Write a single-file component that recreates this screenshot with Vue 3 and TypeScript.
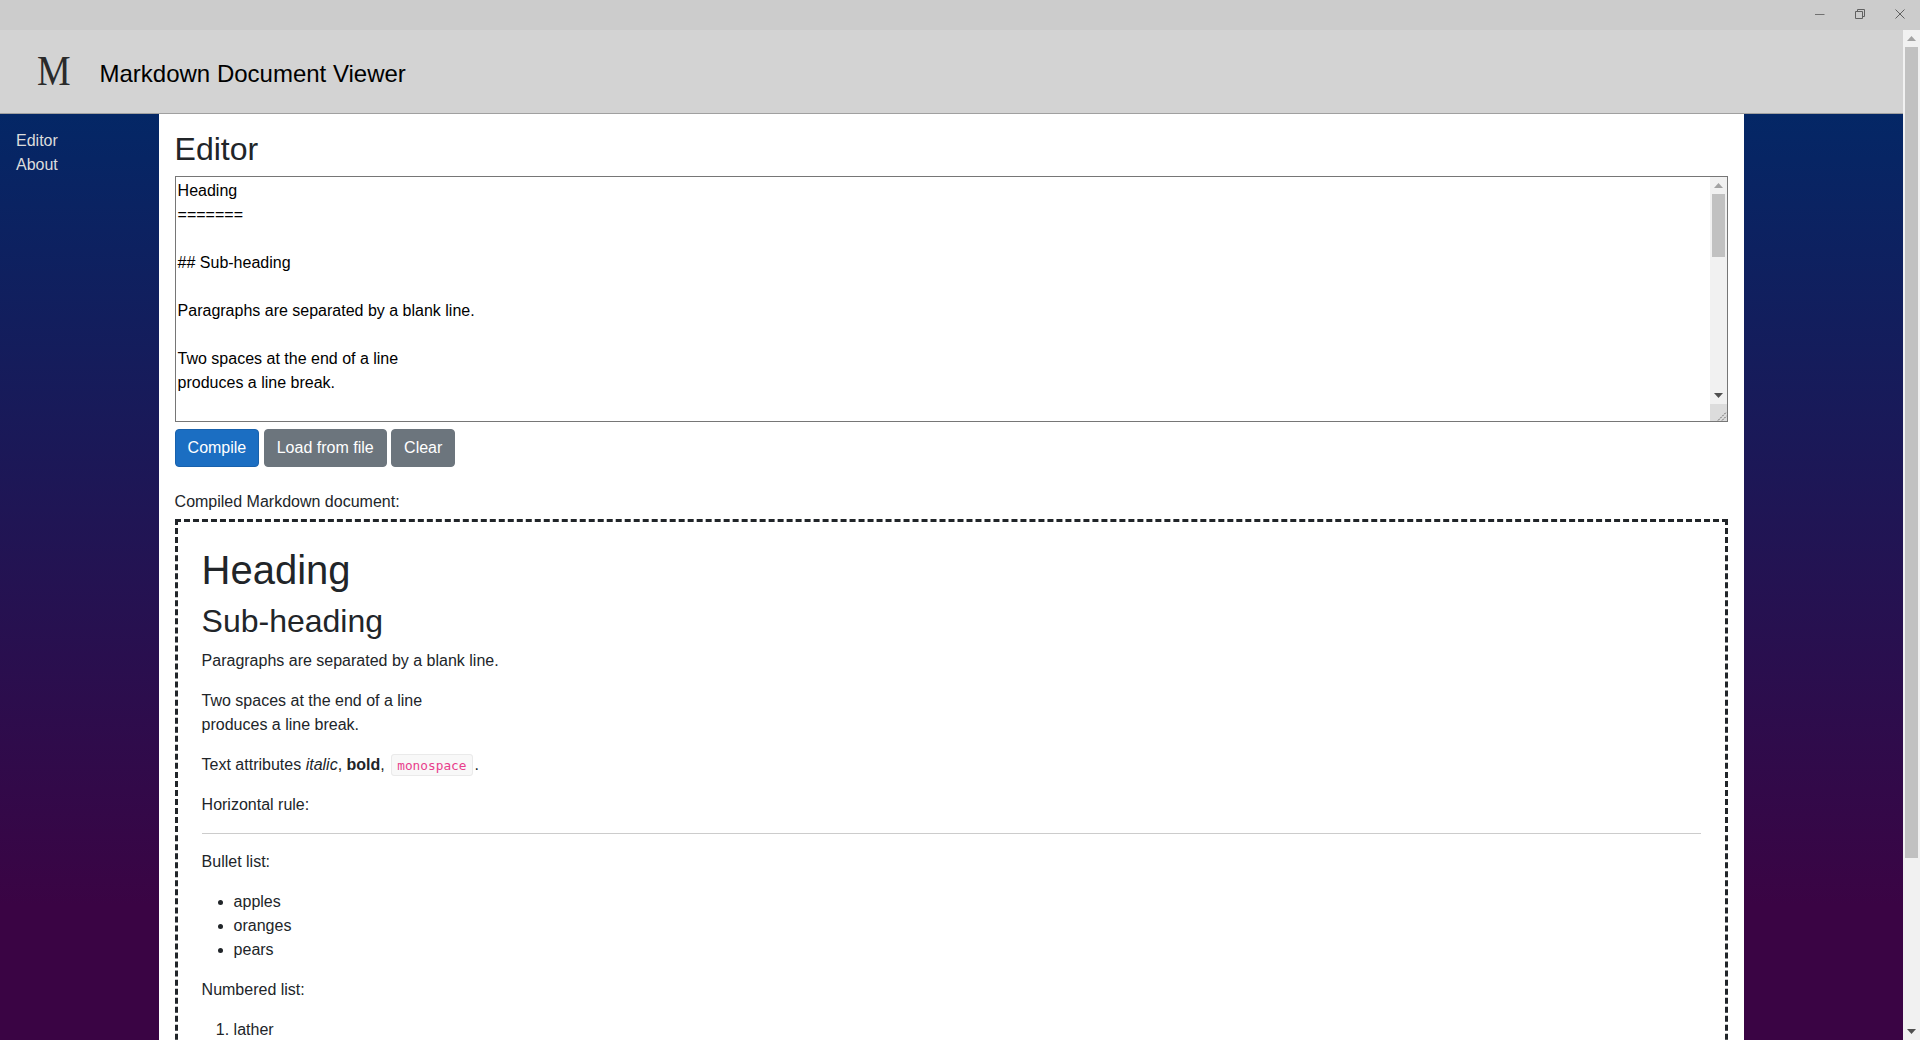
<script setup lang="ts">
import { ref } from 'vue'

const source = ref<string>(`Heading
=======

## Sub-heading

Paragraphs are separated by a blank line.

Two spaces at the end of a line
produces a line break.

Text attributes _italic_, **bold**, \`monospace\`.

Horizontal rule:

---

Bullet list:

  * apples
  * oranges
  * pears

Numbered list:

  1. lather
  2. rinse
  3. repeat

An [example](http://example.com).

![Image](Icon-pictures.png "icon")`)

const navItems: string[] = ['Editor', 'About']
const bullets: string[] = ['apples', 'oranges', 'pears']
</script>

<template>
  <div class="window">
    <div class="titlebar">
      <button class="win-btn" aria-label="Minimize">
        <svg width="10" height="10" viewBox="0 0 10 10"><path d="M0 5.5h9.5" stroke="#707070" fill="none" /></svg>
      </button>
      <button class="win-btn" aria-label="Restore">
        <svg width="10" height="10" viewBox="0 0 10 10"><path d="M.5 2.5h7v7h-7zM2.5 2.5v-2h7v7h-2" stroke="#606060" fill="none" /></svg>
      </button>
      <button class="win-btn" aria-label="Close">
        <svg width="10" height="10" viewBox="0 0 10 10"><path d="M.5.5l9 9M9.5.5l-9 9" stroke="#606060" fill="none" /></svg>
      </button>
    </div>

    <div class="viewport">
      <div class="page">
        <header class="appbar">
          <span class="logo">M</span>
          <span class="app-title">Markdown Document Viewer</span>
        </header>

        <div class="layout">
          <nav class="sidebar">
            <a v-for="item in navItems" :key="item" href="#" class="nav-link">{{ item }}</a>
          </nav>

          <main class="main">
            <h2 class="editor-title">Editor</h2>
            <div class="source-wrap">
              <textarea v-model="source" class="source" rows="10" spellcheck="false"></textarea>
              <div class="vbar vbar-inset">
                <div class="vbar-btn">
                  <svg width="9" height="5" viewBox="0 0 9 5"><path d="M4.5 0L9 5H0z" fill="#a3a3a3" /></svg>
                </div>
                <div class="vbar-track"><div class="vbar-thumb thumb-source"></div></div>
                <div class="vbar-btn">
                  <svg width="9" height="5" viewBox="0 0 9 5"><path d="M0 0h9L4.5 5z" fill="#505050" /></svg>
                </div>
                <div class="vbar-corner">
                  <svg width="17" height="17" viewBox="0 0 17 17"><path d="M8 16.5L16.5 8M12 16.5L16.5 12" stroke="#666" fill="none" stroke-dasharray="2 1" /></svg>
                </div>
              </div>
            </div>
            <div class="actions">
              <button class="btn btn-primary">Compile</button>
              <button class="btn btn-secondary">Load from file</button>
              <button class="btn btn-secondary">Clear</button>
            </div>
            <p class="compiled-label">Compiled Markdown document:</p>
            <article class="document">
              <h1>Heading</h1>
              <h2>Sub-heading</h2>
              <p>Paragraphs are separated by a blank line.</p>
              <p>Two spaces at the end of a line<br />produces a line break.</p>
              <p>Text attributes <em>italic</em>, <strong>bold</strong>, <code>monospace</code>.</p>
              <p>Horizontal rule:</p>
              <hr />
              <p>Bullet list:</p>
              <ul>
                <li v-for="b in bullets" :key="b">{{ b }}</li>
              </ul>
              <p>Numbered list:</p>
              <ol>
                <li>lather</li>
              </ol>
            </article>
          </main>

          <div class="gutter"></div>
        </div>
      </div>

      <div class="vbar">
        <div class="vbar-btn">
          <svg width="9" height="5" viewBox="0 0 9 5"><path d="M4.5 0L9 5H0z" fill="#a3a3a3" /></svg>
        </div>
        <div class="vbar-track"><div class="vbar-thumb thumb-page"></div></div>
        <div class="vbar-btn">
          <svg width="9" height="5" viewBox="0 0 9 5"><path d="M0 0h9L4.5 5z" fill="#505050" /></svg>
        </div>
      </div>
    </div>
  </div>
</template>

<style scoped>
.window {
  height: 100vh;
  display: flex;
  flex-direction: column;
  font-family: "Liberation Sans", Arial, sans-serif;
  font-size: 16px;
  line-height: 1.5;
  color: #212529;
}
.titlebar {
  flex: 0 0 30px;
  background: #cccccc;
  display: flex;
  justify-content: flex-end;
}
.win-btn {
  width: 40px;
  height: 30px;
  border: 0;
  padding: 0 0 3px 0;
  background: none;
  display: flex;
  align-items: center;
  justify-content: center;
}
.viewport {
  flex: 1 1 auto;
  min-height: 0;
  display: flex;
}
.page {
  flex: 1 1 auto;
  min-width: 0;
  overflow: hidden;
  display: flex;
  flex-direction: column;
}
.vbar {
  flex: 0 0 17px;
  width: 17px;
  display: flex;
  flex-direction: column;
  background: #f1f1f1;
}
.vbar-inset {
  position: absolute;
  top: 1px;
  right: 1px;
  bottom: 1px;
}
.vbar-btn {
  flex: 0 0 17px;
  display: flex;
  align-items: center;
  justify-content: center;
}
.vbar-track {
  flex: 1 1 auto;
  min-height: 0;
  padding: 0 2px;
}
.vbar-thumb {
  background: #c1c1c1;
}
.thumb-page {
  height: 811px;
}
.thumb-source {
  height: 63px;
}
.vbar-corner {
  flex: 0 0 17px;
  height: 17px;
  background: #dcdcdc;
}
.vbar-corner svg {
  display: block;
}
.appbar {
  flex: 0 0 84px;
  box-sizing: border-box;
  background: #d3d3d3;
  border-bottom: 1px solid #a0a0a0;
  display: flex;
  align-items: center;
  padding: 4px 0 0 37px;
  color: #000;
}
.logo {
  display: inline-block;
  width: 35px;
  margin-right: 27.5px;
  font-family: "Liberation Serif", serif;
  font-size: 42px;
  line-height: 1;
  text-align: center;
  color: #2a2a2a;
  transform: scaleX(0.9);
  transform-origin: left center;
  position: relative;
  top: -3px;
}
.app-title {
  font-size: 24px;
  line-height: 36px;
  color: #000;
}
.layout {
  flex: 1 1 auto;
  display: grid;
  grid-template-columns: 1fr 10fr 1fr;
  background-color: #3a0444;
  background-image: linear-gradient(#042766, #3a0444);
  background-size: 100% 790px;
  background-repeat: no-repeat;
}
.sidebar {
  padding: 15px 16px;
  display: flex;
  flex-direction: column;
  align-items: flex-start;
}
.nav-link {
  color: #dcdcdc;
  text-decoration: none;
}
.main {
  background: #fff;
  padding: 16px;
  min-width: 0;
}
.editor-title {
  margin: 0 0 8px;
  font-size: 32px;
  font-weight: 500;
  line-height: 1.2;
}
.source-wrap {
  position: relative;
}
.source {
  display: block;
  box-sizing: border-box;
  width: 100%;
  height: 246px;
  margin: 0;
  padding: 2px 20px 2px 2px;
  border: 1px solid #767676;
  font: inherit;
  color: #000;
  background: #fff;
  outline: none;
  overflow: hidden;
  resize: none;
}
.actions {
  display: flex;
  gap: 4.45px;
  margin-top: 7px;
}
.btn {
  font: inherit;
  padding: 6px 12px;
  border: 1px solid transparent;
  border-radius: 4px;
  color: #fff;
  line-height: 24px;
}
.btn-primary {
  background: #1b6ec2;
  border-color: #1861ac;
}
.btn-secondary {
  background: #6c757d;
  border-color: #6c757d;
}
.compiled-label {
  margin: 23px 0 5px;
}
.document {
  border: 3px dashed #212529;
  padding: 24px;
}
.document h1 {
  margin: 0 0 8px;
  font-size: 40px;
  font-weight: 500;
  line-height: 1.2;
}
.document h2 {
  margin: 0 0 8px;
  font-size: 32px;
  font-weight: 500;
  line-height: 1.2;
}
.document p {
  margin: 0 0 16px;
}
.document hr {
  margin: 16px 0;
  border: 0;
  border-top: 1px solid rgba(0, 0, 0, 0.2);
}
.document ul,
.document ol {
  margin: 0 0 16px;
  padding-left: 32px;
}
.document code {
  font-family: "DejaVu Sans Mono", monospace;
  font-size: 12.8px;
  padding: 2.5px 5px;
  margin: 0 2px;
  color: #e83e8c;
  background: #f8f8f8;
  border: 1px solid #eaeaea;
  border-radius: 3px;
}
.gutter {
  min-width: 0;
}
</style>

<style>
html,
body {
  margin: 0;
  overflow: hidden;
}
</style>
